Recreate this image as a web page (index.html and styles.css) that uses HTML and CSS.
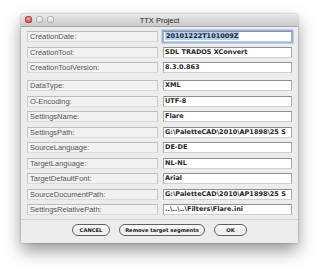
FILE: index.html
```html
<!DOCTYPE html>
<html>
<head>
<meta charset="utf-8">
<link rel="stylesheet" href="styles.css">
</head>
<body>
<div class="stage">
  <div class="window">
    <div class="titlebar">
      <div class="lights">
        <span class="light red"></span>
        <span class="light"></span>
        <span class="light"></span>
      </div>
      <div class="title">TTX Project</div>
    </div>
    <div class="content">
      <div class="row"><div class="label">CreationDate:</div><div class="value focus"><span class="sel">20101222T101009Z</span></div></div>
      <div class="row"><div class="label">CreationTool:</div><div class="value">SDL TRADOS XConvert</div></div>
      <div class="row"><div class="label">CreationToolVersion:</div><div class="value">8.3.0.863</div></div>
      <div class="row first-of-group"><div class="label">DataType:</div><div class="value">XML</div></div>
      <div class="row"><div class="label">O-Encoding:</div><div class="value">UTF-8</div></div>
      <div class="row"><div class="label">SettingsName:</div><div class="value">Flare</div></div>
      <div class="row"><div class="label">SettingsPath:</div><div class="value">G:\PaletteCAD\2010\AP1898\25 S</div></div>
      <div class="row"><div class="label">SourceLanguage:</div><div class="value">DE-DE</div></div>
      <div class="row"><div class="label">TargetLanguage:</div><div class="value">NL-NL</div></div>
      <div class="row"><div class="label">TargetDefaultFont:</div><div class="value">Arial</div></div>
      <div class="row"><div class="label">SourceDocumentPath:</div><div class="value">G:\PaletteCAD\2010\AP1898\25 S</div></div>
      <div class="row"><div class="label">SettingsRelativePath:</div><div class="value">..\..\..\Filters\Flare.ini</div></div>
    </div>
    <div class="footer">
      <button class="btn w-cancel">CANCEL</button>
      <button class="btn w-remove">Remove target segments</button>
      <button class="btn w-ok">OK</button>
    </div>
  </div>
</div>
</body>
</html>
```

FILE: styles.css
```css
html, body {
  margin: 0;
  padding: 0;
  background: #ffffff;
}

.stage {
  width: 320px;
  height: 272px;
  padding: 14px 0 0 21px;
  box-sizing: border-box;
}

.window {
  width: 277px;
  height: 229px;
  background: #ececec;
  box-shadow: 0 8px 16px rgba(0, 0, 0, 0.4), 0 0 2px rgba(0, 0, 0, 0.3);
  display: flex;
  flex-direction: column;
  box-sizing: border-box;
}

.titlebar {
  height: 12px;
  background: linear-gradient(#e9e9e9, #c9c9c9);
  border-bottom: 1px solid #a5a5a5;
  position: relative;
  display: flex;
  align-items: center;
  justify-content: center;
}

.lights {
  position: absolute;
  left: 4px;
  top: 2px;
  display: flex;
  gap: 4px;
}

.light {
  width: 7px;
  height: 7px;
  border-radius: 50%;
  background: radial-gradient(circle at 50% 35%, #f4f4f4, #c4c4c4);
  box-shadow: inset 0 0 0 0.5px #9a9a9a;
}

.light.red {
  background: radial-gradient(circle at 50% 35%, #f7a0a0, #d2272a);
  box-shadow: inset 0 0 0 0.5px #8c2a2a;
}

.title {
  font-family: "Liberation Sans", Arial, sans-serif;
  font-size: 7.5px;
  color: #222;
}

.content {
  padding: 4px 6px 0 6px;
  display: flex;
  flex-direction: column;
  gap: 4.5px;
}

.row {
  display: grid;
  grid-template-columns: 131px 129px;
  column-gap: 5px;
  height: 11px;
}

.row.first-of-group {
  margin-top: 2.5px;
}

.label {
  background: #f1f1f1;
  border: 1px solid #c9c9c9;
  border-top-color: #bdbdbd;
  border-bottom-color: #dadada;
  font-family: "Liberation Sans", Arial, sans-serif;
  font-size: 7.5px;
  color: #555;
  line-height: 9px;
  padding-left: 2px;
  white-space: nowrap;
  overflow: hidden;
}

.value {
  background: #ffffff;
  border: 1px solid #a9a9a9;
  border-top-color: #8e8e8e;
  border-bottom-color: #cfcfcf;
  font-family: "DejaVu Sans", sans-serif;
  font-weight: bold;
  font-size: 6.5px;
  color: #262626;
  line-height: 9px;
  padding-left: 1px;
  white-space: nowrap;
  overflow: hidden;
}

.value.focus {
  box-shadow: 0 0 0 1.5px #8fb4e4;
}

.sel {
  background: #b3d1f7;
  padding: 0 1px;
}

.footer {
  margin-top: 4px;
  border-top: 1px solid #d4d4d4;
  display: flex;
  justify-content: center;
  gap: 9px;
  padding-top: 4px;
}

.btn {
  height: 12px;
  border: 1px solid #5f5f5f;
  border-radius: 6px;
  background: linear-gradient(#ffffff, #ececec 55%, #f6f6f6);
  font-family: "DejaVu Sans", sans-serif;
  font-weight: bold;
  font-size: 5.2px;
  color: #222;
  padding: 0;
  margin: 0;
  line-height: 10px;
}

.w-cancel { width: 38px; }
.w-remove { width: 86px; }
.w-ok { width: 33px; }
```
